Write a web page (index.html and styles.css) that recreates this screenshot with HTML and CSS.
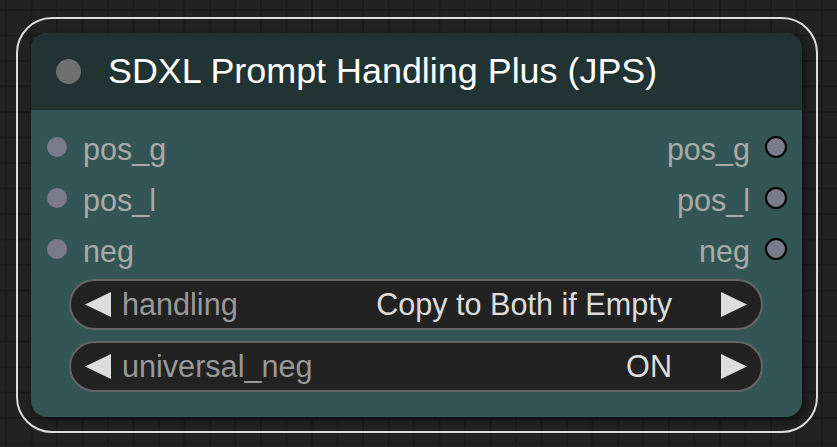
FILE: index.html
```html
<!DOCTYPE html>
<html>
<head>
<meta charset="utf-8">
<link rel="stylesheet" href="styles.css">
</head>
<body>
<div class="canvas">
  <div class="selection">
    <div class="node">
      <div class="title-bar">
        <span class="title-dot"></span>
        <span class="title-text">SDXL Prompt Handling Plus (JPS)</span>
      </div>
      <div class="node-body">
        <div class="slot-row">
          <div class="slot-in"><span class="dot"></span><span class="slot-label">pos_g</span></div>
          <div class="slot-out"><span class="slot-label">pos_g</span><span class="dot out"></span></div>
        </div>
        <div class="slot-row">
          <div class="slot-in"><span class="dot"></span><span class="slot-label">pos_l</span></div>
          <div class="slot-out"><span class="slot-label">pos_l</span><span class="dot out"></span></div>
        </div>
        <div class="slot-row">
          <div class="slot-in"><span class="dot"></span><span class="slot-label">neg</span></div>
          <div class="slot-out"><span class="slot-label">neg</span><span class="dot out"></span></div>
        </div>
        <div class="widgets">
          <div class="combo">
            <svg class="arrow" width="26" height="25" viewBox="0 0 26 25"><polygon points="0,12.5 26,0 26,25" fill="#ddd"/></svg>
            <span class="combo-label">handling</span>
            <span class="combo-value">Copy to Both if Empty</span>
            <svg class="arrow" width="26" height="25" viewBox="0 0 26 25"><polygon points="26,12.5 0,0 0,25" fill="#ddd"/></svg>
          </div>
          <div class="combo">
            <svg class="arrow" width="26" height="25" viewBox="0 0 26 25"><polygon points="0,12.5 26,0 26,25" fill="#ddd"/></svg>
            <span class="combo-label">universal_neg</span>
            <span class="combo-value">ON</span>
            <svg class="arrow" width="26" height="25" viewBox="0 0 26 25"><polygon points="26,12.5 0,0 0,25" fill="#ddd"/></svg>
          </div>
        </div>
      </div>
    </div>
  </div>
</div>
</body>
</html>
```

FILE: styles.css
```css
html, body {
  margin: 0;
  padding: 0;
}
body {
  width: 837px;
  height: 447px;
  overflow: hidden;
  background-color: #222;
  background-image:
    linear-gradient(#1b1b1b 2px, transparent 2px),
    linear-gradient(90deg, #1b1b1b 2px, transparent 2px);
  background-size: 25.5px 25.5px;
  background-position: 5px 9px;
  font-family: "Liberation Sans", Arial, sans-serif;
}
.canvas {
  padding: 17px 0 0 16px;
}
.selection {
  box-sizing: border-box;
  width: 802px;
  height: 416px;
  border: 2px solid #ddd;
  border-radius: 36px;
  padding: 14px 14px 14px 13px;
}
.node {
  width: 771px;
  height: 384px;
  border-radius: 16px;
  background: #355;
  overflow: hidden;
  box-shadow: 3px 3px 8px rgba(0, 0, 0, 0.5);
  display: flex;
  flex-direction: column;
}
.title-bar {
  height: 77px;
  flex: none;
  background: #233;
  display: flex;
  align-items: center;
  padding-left: 25px;
}
.title-dot {
  width: 25px;
  height: 25px;
  border-radius: 50%;
  background: #707070;
  flex: none;
}
.title-text {
  margin-left: 27px;
  color: #fff;
  font-size: 35.9px;
  white-space: nowrap;
}
.node-body {
  padding-top: 10px;
  border-top: 1px solid rgba(0, 0, 0, 0.08);
}
.slot-row {
  height: 51px;
  display: flex;
  align-items: center;
  justify-content: space-between;
  padding: 0 15px 0 16px;
}
.slot-in, .slot-out {
  display: flex;
  align-items: center;
}
.slot-label {
  color: #aaa;
  font-size: 30.5px;
  line-height: 34px;
  margin-top: 4px;
  white-space: nowrap;
}
.slot-in .slot-label {
  margin-left: 16px;
}
.slot-out .slot-label {
  margin-right: 15px;
}
.dot {
  width: 20px;
  height: 20px;
  border-radius: 50%;
  background: #7a7a8c;
  flex: none;
}
.dot.out {
  box-sizing: border-box;
  width: 22px;
  height: 22px;
  border: 2px solid #000;
}
.widgets {
  margin-top: 5px;
  padding: 0 39px 0 38px;
  display: flex;
  flex-direction: column;
  gap: 11px;
}
.combo {
  box-sizing: border-box;
  height: 51px;
  background: #222;
  border: 2px solid #666;
  border-radius: 26px;
  display: flex;
  align-items: center;
  padding: 0 14px 0 14px;
  font-size: 30.6px;
  white-space: nowrap;
}
.arrow {
  flex: none;
  display: block;
}
.combo-label {
  color: #999;
  margin-left: 11px;
  flex: 1;
}
.combo-value {
  color: #ddd;
  margin-right: 49px;
}
```
